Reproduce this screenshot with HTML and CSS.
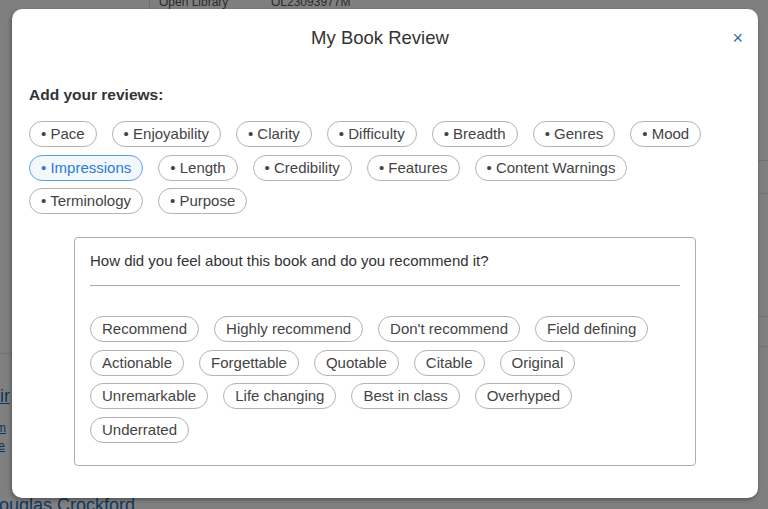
FILE: index.html
```html
<!DOCTYPE html>
<html lang="en">
<head>
<meta charset="utf-8">
<title>My Book Review</title>
<link rel="stylesheet" href="styles.css">
</head>
<body>
<div class="page">
  <div class="bg-vline"></div>
  <div class="bg-meta"><span class="bg-label">Open Library</span><span class="bg-value">OL23093977M</span></div>
  <div class="bg-hline bg-h1"></div>
  <div class="bg-hline bg-h2"></div>
  <div class="bg-hline bg-h3"></div>
  <div class="bg-hline bg-h4"></div>
  <div class="bg-hline bg-h5"></div>
  <a class="bg-link bg-l1" href="#">Chair</a>
  <a class="bg-link-sm bg-l2" href="#">Recomm</a>
  <a class="bg-link-sm bg-l3" href="#">Share</a>
  <a class="bg-author" href="#">Douglas Crockford</a>
</div>
<div class="overlay"></div>
<div class="modal">
  <header class="modal-header">
    <h2 class="modal-title">My Book Review</h2>
    <button class="modal-close" type="button">&times;</button>
  </header>
  <section class="modal-body">
    <h3 class="section-title">Add your reviews:</h3>
    <div class="chips">
      <span class="chip">• Pace</span>
      <span class="chip">• Enjoyability</span>
      <span class="chip">• Clarity</span>
      <span class="chip">• Difficulty</span>
      <span class="chip">• Breadth</span>
      <span class="chip">• Genres</span>
      <span class="chip">• Mood</span>
      <span class="chip chip-active">• Impressions</span>
      <span class="chip">• Length</span>
      <span class="chip">• Credibility</span>
      <span class="chip">• Features</span>
      <span class="chip">• Content Warnings</span>
      <span class="chip">• Terminology</span>
      <span class="chip">• Purpose</span>
    </div>
    <div class="question-box">
      <p class="question">How did you feel about this book and do you recommend it?</p>
      <hr class="question-rule">
      <div class="chips">
        <span class="chip">Recommend</span>
        <span class="chip">Highly recommend</span>
        <span class="chip">Don't recommend</span>
        <span class="chip">Field defining</span>
        <span class="chip">Actionable</span>
        <span class="chip">Forgettable</span>
        <span class="chip">Quotable</span>
        <span class="chip">Citable</span>
        <span class="chip">Original</span>
        <span class="chip">Unremarkable</span>
        <span class="chip">Life changing</span>
        <span class="chip">Best in class</span>
        <span class="chip">Overhyped</span>
        <span class="chip">Underrated</span>
      </div>
    </div>
  </section>
</div>
</body>
</html>
```

FILE: styles.css
```css
* { box-sizing: border-box; }

html, body {
  margin: 0;
  padding: 0;
  width: 768px;
  height: 509px;
  overflow: hidden;
}

body {
  position: relative;
  background: #ffffff;
  font-family: "Liberation Sans", Arial, sans-serif;
  color: #333;
}

/* ---------- background page (behind overlay) ---------- */
.page {
  position: absolute;
  inset: 0;
}
.bg-vline {
  position: absolute;
  left: 149px;
  top: 0;
  width: 1px;
  height: 40px;
  background: #ddd;
}
.bg-meta {
  position: absolute;
  left: 159px;
  top: -6px;
  font-size: 12px;
  line-height: 16px;
  color: #555;
}
.bg-value {
  position: absolute;
  left: 112px;
  white-space: nowrap;
}
.bg-hline {
  position: absolute;
  height: 1px;
  background: #e2e2e2;
}
.bg-h1 { left: 740px; width: 28px; top: 160px; }
.bg-h2 { left: 740px; width: 28px; top: 193px; }
.bg-h3 { left: 740px; width: 28px; top: 316px; }
.bg-h4 { left: 740px; width: 28px; top: 346px; }
.bg-h5 { left: 0; width: 40px; top: 353px; }
.bg-link {
  position: absolute;
  left: -33px;
  top: 386px;
  font-size: 18px;
  color: #1a6fb4;
}
.bg-link-sm {
  position: absolute;
  font-size: 12px;
  color: #1a6fb4;
}
.bg-l2 { left: -42px; top: 421px; }
.bg-l3 { left: -27px; top: 439px; }
.bg-author {
  position: absolute;
  left: -14px;
  top: 495px;
  font-size: 18px;
  color: #1f73b8;
  text-decoration: none;
}

.overlay {
  position: absolute;
  inset: 0;
  background: rgba(0, 0, 0, 0.5);
}

/* ---------- modal ---------- */
.modal {
  position: absolute;
  left: 12px;
  top: 9px;
  width: 746px;
  height: 489px;
  background: #fff;
  border-radius: 10px;
  box-shadow: -1px 2px 4px rgba(0, 0, 0, 0.35);
}

.modal-header {
  position: relative;
  padding: 18px 27px 0 17px;
}
.modal-title {
  margin: 0;
  text-align: center;
  font-size: 18.5px;
  line-height: 22px;
  font-weight: normal;
  color: #333;
}
.modal-close {
  position: absolute;
  right: 15px;
  top: 18px;
  padding: 0;
  border: 0;
  background: none;
  font-family: "Liberation Sans", Arial, sans-serif;
  font-size: 18px;
  line-height: 22px;
  color: #2f6fa8;
  cursor: pointer;
}

.modal-body {
  padding: 0 17px;
}

.section-title {
  margin: 36px 0 16px;
  font-size: 15.5px;
  line-height: 20px;
  font-weight: bold;
  color: #333;
}

.chips {
  display: flex;
  flex-wrap: wrap;
  column-gap: 15px;
  row-gap: 7.5px;
}

.chip {
  display: inline-block;
  height: 26px;
  padding: 0 11px;
  border: 1px solid #b3b3b3;
  border-radius: 13px;
  font-size: 15px;
  line-height: 24px;
  color: #444;
  white-space: nowrap;
  background: #fff;
}
.chip-active {
  border-color: #5da2e6;
  color: #2a7ad8;
  background: #f3f8fe;
}

.question-box {
  width: 622px;
  margin: 23px 0 0 45px;
  padding: 14px 15px 22px;
  border: 1px solid #adadad;
  border-radius: 4px;
}
.question {
  margin: 0;
  font-size: 15px;
  line-height: 18px;
  color: #333;
}
.question-rule {
  margin: 15px 0 30px;
  border: 0;
  border-top: 1px solid #a8a8a8;
  height: 0;
}
```
